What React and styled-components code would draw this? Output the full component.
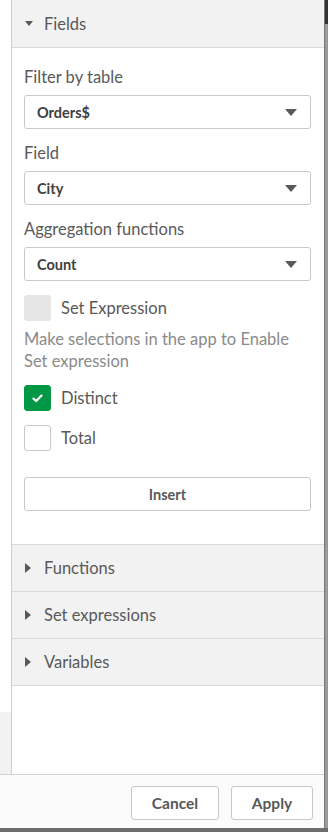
import React from 'react';
import styled, { createGlobalStyle } from 'styled-components';

const GlobalStyle = createGlobalStyle`
  *, *::before, *::after {
    box-sizing: border-box;
  }
  html, body {
    margin: 0;
    padding: 0;
    background: #8c8c8c;
  }
  body {
    font-family: Lato, "Open Sans", "Liberation Sans", sans-serif;
  }
`;

const Page = styled.div`
  width: 328px;
  height: 832px;
  display: flex;
  flex-direction: column;
  overflow: hidden;
`;

const TopRow = styled.div`
  display: flex;
  height: 828px;
`;

const Dialog = styled.div`
  width: 324px;
  display: flex;
  flex-direction: column;
  background: #fff;
`;

const BackStrip = styled.div`
  flex: 1;
  display: flex;
  flex-direction: column;
  background: #9a9a9a;
  border-left: 1px solid #7a7a7a;
`;

const StripTop = styled.div`
  height: 24px;
  background: #333;
`;

const BottomStrip = styled.div`
  height: 4px;
  background: #6e6e6e;
`;

const Body = styled.div`
  flex: 1;
  display: flex;
  min-height: 0;
`;

const Gutter = styled.div`
  width: 12px;
  border-right: 1px solid #cfcfcf;
  display: flex;
  flex-direction: column;
`;

const GutterFill = styled.div`
  background: ${p => (p.$grey ? '#f2f2f2' : '#fff')};
  ${p => (p.$grey ? 'height: 62px;' : 'flex: 1;')}
`;

const Sidebar = styled.div`
  flex: 1;
  display: flex;
  flex-direction: column;
`;

const SectionHeader = styled.div`
  height: ${p => (p.$open ? 48 : 47)}px;
  display: flex;
  align-items: center;
  padding-left: 13px;
  background: #f2f2f2;
  border-bottom: 1px solid #d9d9d9;
  color: #595959;
  font-size: 16.5px;
`;

const Caret = styled.span`
  width: 0;
  height: 0;
  ${p =>
    p.$open
      ? `border-left: 4px solid transparent;
         border-right: 4px solid transparent;
         border-top: 5px solid #595959;
         margin-right: 11px;`
      : `border-top: 5px solid transparent;
         border-bottom: 5px solid transparent;
         border-left: 6px solid #595959;
         margin-right: 13px;`}
`;

const Content = styled.div`
  padding: 19px 13px 33px 12px;
  border-bottom: 1px solid #d9d9d9;
  display: flex;
  flex-direction: column;
`;

const Label = styled.div`
  font-size: 16.5px;
  line-height: 20px;
  color: #595959;
  margin-bottom: 8px;
`;

const Select = styled.div`
  height: 34px;
  border: 1px solid #c8c8c8;
  border-radius: 3px;
  display: flex;
  align-items: center;
  justify-content: space-between;
  padding: 0 13px 0 12px;
  margin-bottom: 14px;
  font-size: 14.5px;
  font-weight: 700;
  color: #404040;
`;

const Arrow = styled.span`
  width: 0;
  height: 0;
  border-left: 6px solid transparent;
  border-right: 6px solid transparent;
  border-top: 7px solid #595959;
`;

const CheckRow = styled.div`
  display: flex;
  align-items: center;
  gap: 10px;
  height: 26px;
  font-size: 16.5px;
  color: #595959;
  margin-bottom: ${p => p.$mb || 0}px;
`;

const Box = styled.span`
  width: 27px;
  height: 26px;
  border-radius: 3px;
  display: flex;
  align-items: center;
  justify-content: center;
  ${p =>
    p.$state === 'checked'
      ? 'background: #009845; border: 1px solid #009845;'
      : p.$state === 'disabled'
      ? 'background: #e6e6e6; border: 1px solid #e6e6e6;'
      : 'background: #fff; border: 1px solid #c8c8c8;'}
`;

const Hint = styled.div`
  font-size: 16.5px;
  line-height: 22px;
  color: #8a8a8a;
  margin: 7px 0 13px;
`;

const InsertButton = styled.button`
  margin-top: 26px;
  height: 34px;
  border: 1px solid #c8c8c8;
  border-radius: 3px;
  background: #fff;
  font-family: inherit;
  font-size: 14.5px;
  font-weight: 700;
  color: #595959;
`;

const Spacer = styled.div`
  flex: 1;
`;

const Footer = styled.div`
  height: 54px;
  border-top: 1px solid #d4d4d4;
  background: #fbfbfb;
  display: flex;
  justify-content: flex-end;
  align-items: flex-start;
  gap: 12px;
  padding: 11px 11px 0 0;
`;

const FooterButton = styled.button`
  width: ${p => p.$w}px;
  height: 34px;
  border: 1px solid #c8c8c8;
  border-radius: 3px;
  background: #fff;
  font-family: inherit;
  font-size: 15.5px;
  font-weight: 700;
  color: #595959;
`;

function Check() {
  return (
    <svg width="11" height="9" viewBox="0 0 11 9">
      <path d="M1.5 4.6 L4.2 7 L9.5 1.6" fill="none" stroke="#fff" strokeWidth="2.2" strokeLinecap="round" strokeLinejoin="round" />
    </svg>
  );
}

const fields = [
  { label: 'Filter by table', value: 'Orders$' },
  { label: 'Field', value: 'City' },
  { label: 'Aggregation functions', value: 'Count' },
];

export default function App() {
  return (
    <Page>
      <GlobalStyle />
      <TopRow>
        <Dialog>
          <Body>
            <Gutter>
              <GutterFill />
              <GutterFill $grey />
            </Gutter>
            <Sidebar>
              <SectionHeader $open>
                <Caret $open />
                Fields
              </SectionHeader>
              <Content>
                {fields.map(f => (
                  <React.Fragment key={f.label}>
                    <Label>{f.label}</Label>
                    <Select>
                      {f.value}
                      <Arrow />
                    </Select>
                  </React.Fragment>
                ))}
                <CheckRow>
                  <Box $state="disabled" />
                  Set Expression
                </CheckRow>
                <Hint>
                  Make selections in the app to Enable
                  <br />
                  Set expression
                </Hint>
                <CheckRow $mb={14}>
                  <Box $state="checked">
                    <Check />
                  </Box>
                  Distinct
                </CheckRow>
                <CheckRow>
                  <Box />
                  Total
                </CheckRow>
                <InsertButton>Insert</InsertButton>
              </Content>
              {['Functions', 'Set expressions', 'Variables'].map(t => (
                <SectionHeader key={t}>
                  <Caret />
                  {t}
                </SectionHeader>
              ))}
              <Spacer />
            </Sidebar>
          </Body>
          <Footer>
            <FooterButton $w={88}>Cancel</FooterButton>
            <FooterButton $w={82}>Apply</FooterButton>
          </Footer>
        </Dialog>
        <BackStrip>
          <StripTop />
        </BackStrip>
      </TopRow>
      <BottomStrip />
    </Page>
  );
}
